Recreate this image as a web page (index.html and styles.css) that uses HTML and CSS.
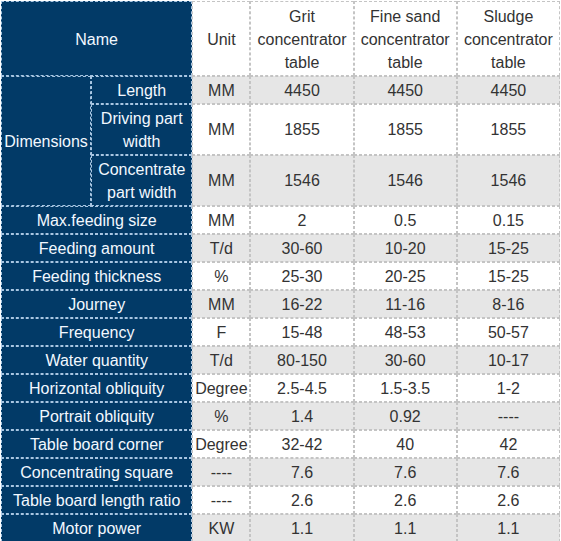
FILE: index.html
```html
<!DOCTYPE html>
<html>
<head>
<meta charset="utf-8">
<link rel="stylesheet" href="styles.css">
</head>
<body>
<table class="spec">
<colgroup>
<col class="c1"><col class="c2"><col class="c3"><col class="c4"><col class="c4"><col class="c4">
</colgroup>
<tr class="h3">
<th colspan="2" class="nv">Name</th>
<td>Unit</td>
<td>Grit<br>concentrator<br>table</td>
<td>Fine sand<br>concentrator<br>table</td>
<td>Sludge<br>concentrator<br>table</td>
</tr>
<tr class="h1 g">
<th rowspan="3" class="nv">Dimensions</th>
<th class="nv">Length</th>
<td>MM</td><td>4450</td><td>4450</td><td>4450</td>
</tr>
<tr class="h2">
<th class="nv">Driving part<br>width</th>
<td>MM</td><td>1855</td><td>1855</td><td>1855</td>
</tr>
<tr class="h2 g">
<th class="nv">Concentrate<br>part width</th>
<td>MM</td><td>1546</td><td>1546</td><td>1546</td>
</tr>
<tr class="h1"><th colspan="2" class="nv">Max.feeding size</th><td>MM</td><td>2</td><td>0.5</td><td>0.15</td></tr>
<tr class="h1 g"><th colspan="2" class="nv">Feeding amount</th><td>T/d</td><td>30-60</td><td>10-20</td><td>15-25</td></tr>
<tr class="h1"><th colspan="2" class="nv">Feeding thickness</th><td>%</td><td>25-30</td><td>20-25</td><td>15-25</td></tr>
<tr class="h1 g"><th colspan="2" class="nv">Journey</th><td>MM</td><td>16-22</td><td>11-16</td><td>8-16</td></tr>
<tr class="h1"><th colspan="2" class="nv">Frequency</th><td>F</td><td>15-48</td><td>48-53</td><td>50-57</td></tr>
<tr class="h1 g"><th colspan="2" class="nv">Water quantity</th><td>T/d</td><td>80-150</td><td>30-60</td><td>10-17</td></tr>
<tr class="h1"><th colspan="2" class="nv">Horizontal obliquity</th><td>Degree</td><td>2.5-4.5</td><td>1.5-3.5</td><td>1-2</td></tr>
<tr class="h1 g"><th colspan="2" class="nv">Portrait obliquity</th><td>%</td><td>1.4</td><td>0.92</td><td>----</td></tr>
<tr class="h1"><th colspan="2" class="nv">Table board corner</th><td>Degree</td><td>32-42</td><td>40</td><td>42</td></tr>
<tr class="h1 g"><th colspan="2" class="nv">Concentrating square</th><td>----</td><td>7.6</td><td>7.6</td><td>7.6</td></tr>
<tr class="h1"><th colspan="2" class="nv">Table board length ratio</th><td>----</td><td>2.6</td><td>2.6</td><td>2.6</td></tr>
<tr class="h1 g"><th colspan="2" class="nv">Motor power</th><td>KW</td><td>1.1</td><td>1.1</td><td>1.1</td></tr>
</table>
</body>
</html>
```
FILE: styles.css
```css
html, body {
  margin: 0;
  padding: 0;
  background: #ffffff;
}
body {
  padding: 1px 0 0 1px;
}
.spec {
  border-collapse: separate;
  border-spacing: 0;
  table-layout: fixed;
  width: 559px;
  font-family: "Liberation Sans", Arial, sans-serif;
  font-size: 16px;
  line-height: 23px;
  color: #333333;
}
.c1 { width: 90px; }
.c2 { width: 101px; }
.c3 { width: 58px; }
.c4 { width: 103px; }
.spec th, .spec td {
  padding: 0;
  text-align: center;
  vertical-align: middle;
  font-weight: normal;
  white-space: nowrap;
  overflow: hidden;
}
.spec tr.h3 th, .spec tr.h3 td {
  padding-top: 2px;
}
.spec td {
  border: 1px dashed #c4c4c4;
  background: #ffffff;
}
.spec tr.g td {
  background: #e6e6e6;
}
.spec th.nv {
  background: #023a67;
  color: #f2f8ff;
  border: 1px dashed #a9c6e2;
}
.h1 { height: 28px; }
.h2 { height: 51px; }
.h3 { height: 75px; }
```
